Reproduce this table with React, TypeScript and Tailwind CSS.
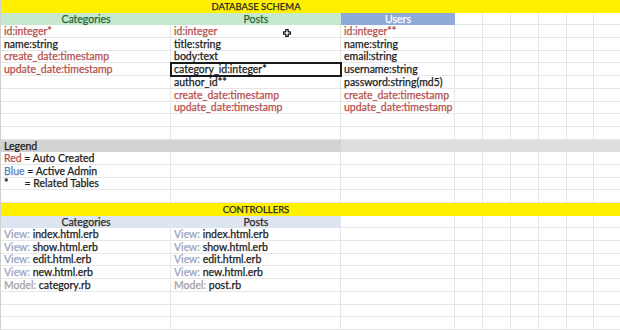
import type { ReactNode } from "react";

// column widths of the sheet, in px
const extraCols = [28, 28, 28, 28, 27, 27];

type Cell = { content?: ReactNode; className?: string };

const red = "text-[#b5514c]";
const dark = "text-[#1c1c1c]";

const Row = ({ a, b, c, rest = "", selectedB = false }: { a?: Cell; b?: Cell; c?: Cell; rest?: string; selectedB?: boolean }) => (
    <div className="flex h-[12.69px]">
        <div className={`w-[170px] shrink-0 border-r border-b border-[#e6e6e6] pl-[3px] flex items-end whitespace-nowrap overflow-visible ${a?.className ?? ""}`}>
            {a?.content}
        </div>
        <div className={`relative w-[170px] shrink-0 border-r border-b border-[#e6e6e6] pl-[3px] flex items-end whitespace-nowrap ${b?.className ?? ""} ${selectedB ? "outline-2 outline-[#1a1a1a] -outline-offset-1 z-10" : ""}`}>
            {b?.content}
        </div>
        <div className={`w-[114px] shrink-0 border-r border-b border-[#e6e6e6] pl-[3px] flex items-end whitespace-nowrap ${c?.className ?? ""}`}>
            {c?.content}
        </div>
        {extraCols.map((w, i) => (
            <div key={i} className={`shrink-0 border-r border-b border-[#e6e6e6] ${rest}`} style={{ width: w }} />
        ))}
    </div>
);

const Banner = ({ label }: { label: string }) => (
    <div className="flex h-[12.69px] bg-[#fff000]">
        <div className="w-[510px] shrink-0 flex items-end justify-center leading-[12px] text-[9.5px] text-[#262626]">{label}</div>
    </div>
);

const View = ({ file }: { file: string }) => (
    <span><span className="text-[#9aa6bb]">View: </span><span className={dark}>{file}</span></span>
);

const Model = ({ file }: { file: string }) => (
    <span><span className="text-[#a3a3a3]">Model: </span><span className={dark}>{file}</span></span>
);

export default function App() {
    const schema: [Cell, Cell, Cell][] = [
        [{ content: "id:integer*", className: red }, { content: "id:integer", className: red }, { content: "id:integer**", className: red }],
        [{ content: "name:string", className: dark }, { content: "title:string", className: dark }, { content: "name:string", className: dark }],
        [{ content: "create_date:timestamp", className: red }, { content: "body:text", className: dark }, { content: "email:string", className: dark }],
        [{ content: "update_date:timestamp", className: red }, { content: "category_id:integer*", className: dark }, { content: "username:string", className: dark }],
        [{}, { content: "author_id**", className: dark }, { content: "password:string(md5)", className: dark }],
        [{}, { content: "create_date:timestamp", className: red }, { content: "create_date:timestamp", className: red }],
        [{}, { content: "update_date:timestamp", className: red }, { content: "update_date:timestamp", className: red }],
    ];

    const controllers = [
        { a: <View file="index.html.erb" />, b: <View file="index.html.erb" /> },
        { a: <View file="show.html.erb" />, b: <View file="show.html.erb" /> },
        { a: <View file="edit.html.erb" />, b: <View file="edit.html.erb" /> },
        { a: <View file="new.html.erb" />, b: <View file="new.html.erb" /> },
        { a: <Model file="category.rb" />, b: <Model file="post.rb" /> },
    ];

    return (
        <div className="relative w-[620px] h-[330px] overflow-hidden bg-white font-['Lato',sans-serif] text-[10.5px] leading-[12px] [-webkit-text-stroke:0.25px] border-l border-[#cfcfcf]">
            <Banner label="DATABASE SCHEMA" />

            {/* table headers */}
            <div className="flex h-[12.69px]">
                <div className="w-[170px] shrink-0 bg-[#c6e8cf] text-[#1f6a36] flex items-end justify-center">Categories</div>
                <div className="w-[170px] shrink-0 bg-[#c6e8cf] text-[#1f6a36] flex items-end justify-center">Posts</div>
                <div className="w-[114px] shrink-0 bg-[#8eaad9] text-white flex items-end justify-center">Users</div>
                {extraCols.map((w, i) => (
                    <div key={i} className="shrink-0 border-r border-b border-[#e6e6e6]" style={{ width: w }} />
                ))}
            </div>

            {schema.map(([a, b, c], i) => (
                <Row key={i} a={a} b={b} c={c} selectedB={i === 3} />
            ))}
            <Row />
            <Row />

            {/* legend */}
            <div className="flex h-[12.69px]">
                <div className="w-[340px] shrink-0 bg-[#d3d3d3] pl-[3px] flex items-end text-[#1c1c1c]">Legend</div>
                <div className="flex-1 bg-[#dedede]" />
            </div>
            <Row a={{ content: <span><span className={red}>Red</span> = Auto Created</span>, className: dark }} />
            <Row a={{ content: <span><span className="text-[#5b7fb8]">Blue</span> = Active Admin</span>, className: dark }} />
            <Row a={{ content: <span>*<span className="inline-block w-[16px]" />= Related Tables</span>, className: dark }} />
            <Row />

            <Banner label="CONTROLLERS" />
            <div className="flex h-[12.69px]">
                <div className="w-[170px] shrink-0 bg-[#dce5f0] text-[#2a2a2a] flex items-end justify-center">Categories</div>
                <div className="w-[170px] shrink-0 bg-[#dce5f0] text-[#2a2a2a] flex items-end justify-center">Posts</div>
                <div className="w-[114px] shrink-0 border-r border-b border-[#e6e6e6]" />
                {extraCols.map((w, i) => (
                    <div key={i} className="shrink-0 border-r border-b border-[#e6e6e6]" style={{ width: w }} />
                ))}
            </div>
            {controllers.map((r, i) => (
                <Row key={i} a={{ content: r.a }} b={{ content: r.b }} />
            ))}
            <Row />
            <Row />
            <Row />

            {/* mouse pointer (move cursor) */}
            <svg className="absolute left-[282px] top-[29px]" width="8" height="8" viewBox="0 0 8 8">
                <path d="M2.8 0.6 H5.2 V2.8 H7.4 V5.2 H5.2 V7.4 H2.8 V5.2 H0.6 V2.8 H2.8 Z" fill="#fff" stroke="#111" strokeWidth="1.2" strokeLinejoin="round" />
            </svg>
        </div>
    );
}
